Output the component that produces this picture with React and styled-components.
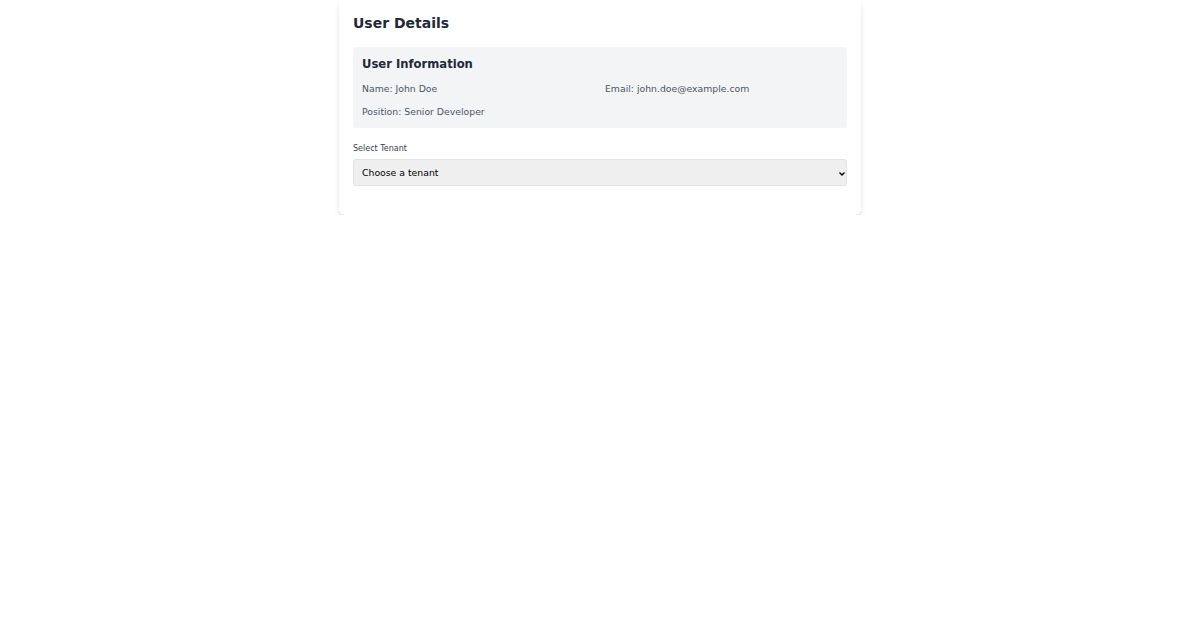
import React from "react";
import styled, { createGlobalStyle } from "styled-components";

const GlobalStyle = createGlobalStyle`
  * {
    box-sizing: border-box;
  }

  body {
    margin: 0;
    background: #ffffff;
    font-family: "DejaVu Sans", sans-serif;
    color: #1f2937;
  }
`;

const Page = styled.div`
  display: flex;
  justify-content: center;
`;

const Card = styled.section`
  width: 522px;
  margin-top: -2px;
  padding: 14px 14px 29px;
  background: #ffffff;
  border-radius: 6px;
  box-shadow: 0 4px 6px -1px rgba(0, 0, 0, 0.12), 0 2px 4px -2px rgba(0, 0, 0, 0.12);
`;

const Title = styled.h2`
  margin: 0 0 13px;
  font-size: 14px;
  line-height: 22px;
  font-weight: bold;
  color: #1f2937;
`;

const InfoBox = styled.div`
  padding: 9px;
  background: #f3f4f6;
  border-radius: 4px;
`;

const InfoTitle = styled.h3`
  margin: 0 0 9px;
  font-size: 11.6px;
  line-height: 17px;
  font-weight: bold;
  color: #1f2937;
`;

const InfoGrid = styled.div`
  display: grid;
  grid-template-columns: 1fr 1fr;
  column-gap: 10px;
  row-gap: 9px;
`;

const InfoItem = styled.p`
  margin: 0;
  font-size: 9.3px;
  line-height: 14px;
  color: #4b5563;
`;

const Field = styled.div`
  display: flex;
  flex-direction: column;
  gap: 4px;
  margin-top: 15px;
`;

const Label = styled.label`
  font-size: 8px;
  line-height: 12px;
  color: #374151;
`;

const SelectWrap = styled.div`
  position: relative;
`;

const Select = styled.select`
  appearance: none;
  width: 100%;
  height: 27px;
  padding: 0 20px 0 8px;
  font-family: "DejaVu Sans", sans-serif;
  font-size: 9.3px;
  font-weight: 400;
  color: #000000;
  background: #efefef;
  border: 1px solid #e3e3e3;
  border-radius: 3px;
`;

const Chevron = styled.svg`
  position: absolute;
  top: 50%;
  right: 2px;
  width: 6px;
  height: 4px;
  margin-top: -1px;
  pointer-events: none;
`;

const user = {
  name: "John Doe",
  email: "john.doe@example.com",
  position: "Senior Developer",
};

const App = () => {
  return (
    <Page>
      <GlobalStyle />
      <Card>
        <Title>User Details</Title>

        <InfoBox>
          <InfoTitle>User Information</InfoTitle>
          <InfoGrid>
            <InfoItem>Name: {user.name}</InfoItem>
            <InfoItem>Email: {user.email}</InfoItem>
            <InfoItem>Position: {user.position}</InfoItem>
          </InfoGrid>
        </InfoBox>

        <Field>
          <Label htmlFor="tenant">Select Tenant</Label>
          <SelectWrap>
            <Select id="tenant" defaultValue="">
              <option value="">Choose a tenant</option>
            </Select>
            <Chevron viewBox="0 0 6 4" aria-hidden="true">
              <path d="M0.5 0.5 L3 3 L5.5 0.5" fill="none" stroke="#000" strokeWidth="1.4" />
            </Chevron>
          </SelectWrap>
        </Field>
      </Card>
    </Page>
  );
};

export default App;
